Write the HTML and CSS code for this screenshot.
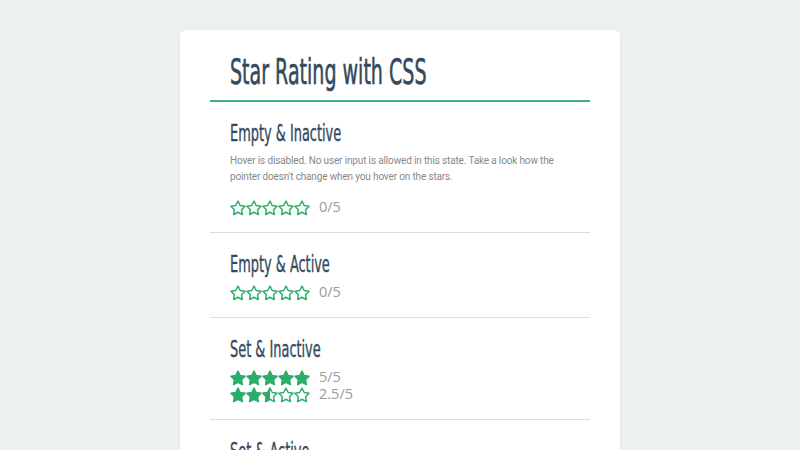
FILE: index.html
```html
<!DOCTYPE html>
<html lang="en">
<head>
<meta charset="utf-8">
<title>Star Rating with CSS</title>
<link rel="stylesheet" href="styles.css">
</head>
<body>
<svg class="defs" width="0" height="0" aria-hidden="true">
  <defs>
    <polygon id="star" points="12,1.6 15.29,8.27 22.65,9.34 17.33,14.53 18.58,21.86 12,18.4 5.42,21.86 6.67,14.53 1.35,9.34 8.71,8.27"/>
    <clipPath id="lefthalf"><rect x="0" y="0" width="12" height="24"/></clipPath>
  </defs>
</svg>
<main class="card">
  <header class="card-head">
    <h1 class="title"><span class="narrow narrow-lg">Star Rating with CSS</span></h1>
  </header>

  <section class="block">
    <h2 class="block-title"><span class="narrow">Empty &amp; Inactive</span></h2>
    <p class="block-text">Hover is disabled. No user input is allowed in this state. Take a look how the pointer doesn't change when you hover on the stars.</p>
    <div class="rating rating-spaced">
      <span class="stars">
        <svg viewBox="0 0 24 24" class="star"><use href="#star" class="o"/></svg>
        <svg viewBox="0 0 24 24" class="star"><use href="#star" class="o"/></svg>
        <svg viewBox="0 0 24 24" class="star"><use href="#star" class="o"/></svg>
        <svg viewBox="0 0 24 24" class="star"><use href="#star" class="o"/></svg>
        <svg viewBox="0 0 24 24" class="star"><use href="#star" class="o"/></svg>
      </span>
      <span class="score">0/5</span>
    </div>
  </section>

  <section class="block">
    <h2 class="block-title"><span class="narrow">Empty &amp; Active</span></h2>
    <div class="rating">
      <span class="stars">
        <svg viewBox="0 0 24 24" class="star"><use href="#star" class="o"/></svg>
        <svg viewBox="0 0 24 24" class="star"><use href="#star" class="o"/></svg>
        <svg viewBox="0 0 24 24" class="star"><use href="#star" class="o"/></svg>
        <svg viewBox="0 0 24 24" class="star"><use href="#star" class="o"/></svg>
        <svg viewBox="0 0 24 24" class="star"><use href="#star" class="o"/></svg>
      </span>
      <span class="score">0/5</span>
    </div>
  </section>

  <section class="block">
    <h2 class="block-title"><span class="narrow">Set &amp; Inactive</span></h2>
    <div class="rating">
      <span class="stars">
        <svg viewBox="0 0 24 24" class="star"><use href="#star" class="f"/></svg>
        <svg viewBox="0 0 24 24" class="star"><use href="#star" class="f"/></svg>
        <svg viewBox="0 0 24 24" class="star"><use href="#star" class="f"/></svg>
        <svg viewBox="0 0 24 24" class="star"><use href="#star" class="f"/></svg>
        <svg viewBox="0 0 24 24" class="star"><use href="#star" class="f"/></svg>
      </span>
      <span class="score">5/5</span>
    </div>
    <div class="rating rating-tight">
      <span class="stars">
        <svg viewBox="0 0 24 24" class="star"><use href="#star" class="f"/></svg>
        <svg viewBox="0 0 24 24" class="star"><use href="#star" class="f"/></svg>
        <svg viewBox="0 0 24 24" class="star"><use href="#star" class="o"/><use href="#star" class="f" clip-path="url(#lefthalf)"/></svg>
        <svg viewBox="0 0 24 24" class="star"><use href="#star" class="o"/></svg>
        <svg viewBox="0 0 24 24" class="star"><use href="#star" class="o"/></svg>
      </span>
      <span class="score">2.5/5</span>
    </div>
  </section>

  <section class="block">
    <h2 class="block-title"><span class="narrow">Set &amp; Active</span></h2>
    <div class="rating">
      <span class="stars">
        <svg viewBox="0 0 24 24" class="star"><use href="#star" class="f"/></svg>
        <svg viewBox="0 0 24 24" class="star"><use href="#star" class="f"/></svg>
        <svg viewBox="0 0 24 24" class="star"><use href="#star" class="f"/></svg>
        <svg viewBox="0 0 24 24" class="star"><use href="#star" class="o"/></svg>
        <svg viewBox="0 0 24 24" class="star"><use href="#star" class="o"/></svg>
      </span>
      <span class="score">3/5</span>
    </div>
  </section>
</main>
</body>
</html>
```

FILE: styles.css
```css
html, body {
  margin: 0;
  padding: 0;
  background: #ecf0f1;
}

body {
  font-family: "Open Sans", "Noto Sans", sans-serif;
  overflow: hidden;
  height: 450px;
}

.defs {
  position: absolute;
  width: 0;
  height: 0;
}

.card {
  width: 380px;
  margin: 30px auto 0;
  padding: 0 30px;
  background: #fff;
  border-radius: 6px;
  box-shadow: 0 1px 4px rgba(0, 0, 0, 0.06);
}

.card-head {
  padding: 20px 20px 6px;
  border-bottom: 2px solid #43ad9a;
}

.title {
  margin: 0;
  font-family: "DejaVu Sans Condensed", "DejaVu Sans", sans-serif;
  font-weight: normal;
  font-size: 35px;
  line-height: 44px;
  color: #34495e;
  white-space: nowrap;
  -webkit-text-stroke: 0.6px #34495e;
}

.narrow {
  display: inline-block;
  transform: scaleX(0.624);
  transform-origin: 0 50%;
}

.narrow-lg {
  transform: scaleX(0.605);
}

.block {
  padding: 17px 20px 16px;
  border-bottom: 1px solid #dcdcdc;
}

.block-title {
  margin: 0;
  font-family: "DejaVu Sans Condensed", "DejaVu Sans", sans-serif;
  font-weight: normal;
  font-size: 23px;
  line-height: 28px;
  color: #34495e;
  white-space: nowrap;
  -webkit-text-stroke: 0.35px #34495e;
}

.block-text {
  margin: 6px 0 0;
  font-family: Roboto, "Open Sans", sans-serif;
  font-size: 10px;
  line-height: 16px;
  letter-spacing: -0.15px;
  color: #888;
}

.rating {
  display: flex;
  align-items: center;
  gap: 9px;
  height: 17px;
  margin-top: 6px;
}

.rating-spaced {
  margin-top: 14px;
}

.rating-tight {
  margin-top: 0;
}

.stars {
  display: flex;
}

.star {
  display: block;
  width: 16px;
  height: 16px;
  overflow: visible;
}

.star .o {
  fill: none;
  stroke: #2bad6a;
  stroke-width: 2.2;
  stroke-linejoin: round;
}

.star .f {
  fill: #2bad6a;
  stroke: #2bad6a;
  stroke-width: 2.2;
  stroke-linejoin: round;
}

.score {
  font-size: 14.5px;
  line-height: 1;
  color: #9a9a9a;
}
```
